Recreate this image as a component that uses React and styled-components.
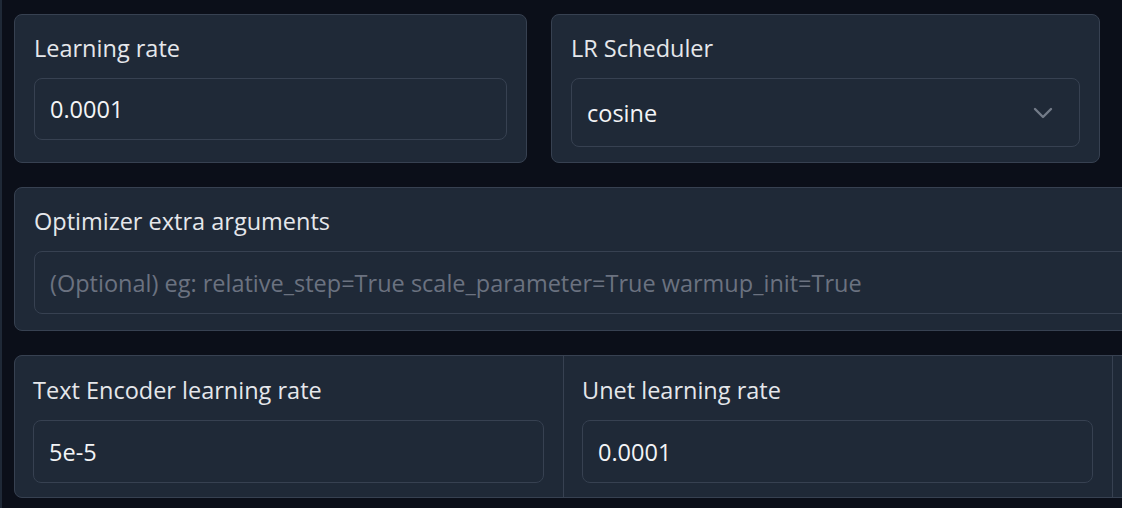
import * as React from "react";
import styled, { createGlobalStyle } from "styled-components";

const GlobalStyle = createGlobalStyle`
  html, body {
    margin: 0;
    padding: 0;
    background: #0b0f19;
    overflow: hidden;
  }
  body {
    font-family: "Open Sans", "Noto Sans", sans-serif;
  }
`;

const Page = styled.div`
  width: 1122px;
  height: 508px;
  box-sizing: border-box;
  border-left: 2px solid #1f2937;
  padding: 14px 0 0 12px;
  display: flex;
  flex-direction: column;
  gap: 24px;
  overflow: hidden;
`;

const Row = styled.div`
  display: flex;
  gap: 24px;
  align-items: stretch;
`;

const Block = styled.div`
  box-sizing: border-box;
  width: ${(p) => p.$width}px;
  flex: none;
  background: #1f2937;
  border: 1px solid #374151;
  border-radius: 8px;
  padding: 19px 19px ${(p) => p.$pb || 16}px 19px;
  display: flex;
  flex-direction: column;
  gap: 16px;
`;

const Form = styled.div`
  display: flex;
  flex: none;
  gap: 1px;
  background: #374151;
  border: 1px solid #374151;
  border-radius: 8px;
  overflow: hidden;
  width: 1400px;
`;

const Cell = styled.div`
  box-sizing: border-box;
  width: ${(p) => p.$width}px;
  flex: none;
  background: #1f2937;
  padding: 20px 19px 14px 18px;
  display: flex;
  flex-direction: column;
  gap: 16px;
`;

const Label = styled.span`
  font-size: 23.5px;
  line-height: 28px;
  color: #e5e7eb;
  white-space: nowrap;
`;

const Input = styled.input`
  box-sizing: border-box;
  width: 100%;
  height: ${(p) => p.$height || 63}px;
  background: #1f2937;
  border: 1px solid #374151;
  border-radius: 8px;
  padding: 0 15px;
  font-family: "Open Sans", "Noto Sans", sans-serif;
  font-size: 23.5px;
  color: #f3f4f6;
  outline: none;

  &::placeholder {
    color: #6b7280;
  }
`;

const Select = styled.div`
  box-sizing: border-box;
  height: 69px;
  background: #1f2937;
  border: 1px solid #374151;
  border-radius: 8px;
  padding: 0 26px 0 15px;
  display: flex;
  align-items: center;
  justify-content: space-between;
  font-size: 23.5px;
  color: #f3f4f6;
`;

const Chevron = () => (
  <svg width="20" height="12" viewBox="0 0 20 12" fill="none">
    <polyline
      points="2,2 10,10 18,2"
      stroke="#737b88"
      strokeWidth="2.4"
      strokeLinecap="round"
      strokeLinejoin="round"
    />
  </svg>
);

const App = () => {
  return (
    <>
      <GlobalStyle />
      <Page>
        <Row>
          <Block $width={513} $pb={15}>
            <Label>Learning rate</Label>
            <Input defaultValue="0.0001" $height={62} />
          </Block>
          <Block $width={549} $pb={15}>
            <Label>LR Scheduler</Label>
            <Select>
              <span>cosine</span>
              <Chevron />
            </Select>
          </Block>
        </Row>
        <Row>
          <Block $width={1300}>
            <Label>Optimizer extra arguments</Label>
            <Input placeholder="(Optional) eg: relative_step=True scale_parameter=True warmup_init=True" />
          </Block>
        </Row>
        <Row>
          <Form>
            <Cell $width={548}>
              <Label>Text Encoder learning rate</Label>
              <Input defaultValue="5e-5" />
            </Cell>
            <Cell $width={548}>
              <Label>Unet learning rate</Label>
              <Input defaultValue="0.0001" />
            </Cell>
            <Cell $width={300} />
          </Form>
        </Row>
      </Page>
    </>
  );
};

export default App;
